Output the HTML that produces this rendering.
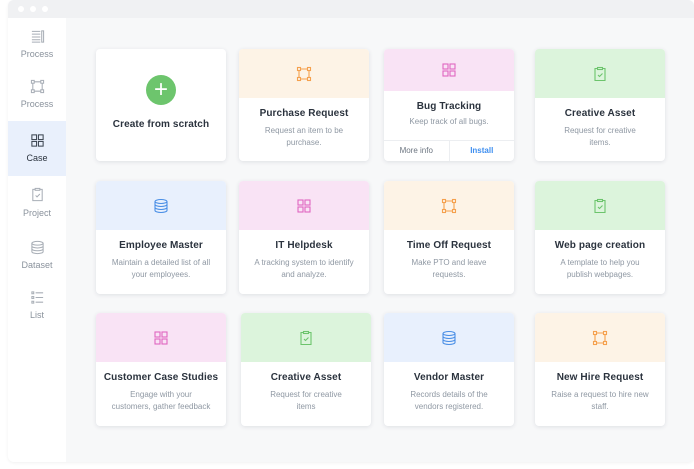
<!DOCTYPE html>
<html><head><meta charset="utf-8"><style>
*{margin:0;padding:0;box-sizing:border-box}
body{width:694px;height:469px;background:#fff;font-family:"Liberation Sans",sans-serif;position:relative;overflow:hidden}
.win{position:absolute;left:8px;top:0;width:686px;height:462px;background:#f7f8f9;border-radius:6px;overflow:hidden;box-shadow:0 1px 3px rgba(0,0,0,.06)}
.bar{position:absolute;left:0;top:0;width:100%;height:18px;background:#f0f1f3}
.dot{position:absolute;top:6px;width:6px;height:6px;border-radius:50%;background:#fff}
.side{position:absolute;left:0;top:18px;width:58px;height:444px;background:#fff}
.si{position:absolute;left:0;width:58px;text-align:center;font-size:9px;color:#8a929c}
.si svg{display:block;margin:0 auto 5px}
.card{position:absolute;width:130px;background:#fff;border-radius:4px;box-shadow:0 1px 4px rgba(40,50,70,.12);overflow:hidden;text-align:center}
.hd{height:49px;display:flex;align-items:center;justify-content:center}
.t{font-size:10px;font-weight:bold;color:#2b333e;margin-top:10px;letter-spacing:.1px}
.d{font-size:8px;color:#8f98a3;line-height:12px;margin-top:6px;padding:0 15px}
.or{background:#fdf3e6}.pk{background:#f9e3f5}.gr{background:#dcf4dc}.bl{background:#e8f0fd}
</style></head><body>
<svg width="0" height="0" style="position:absolute">
<defs>
<symbol id="flow" viewBox="0 0 16 16"><g fill="none" stroke="currentColor" stroke-width="1.1"><rect x="1.5" y="1.5" width="3" height="3"/><rect x="11.5" y="1.5" width="3" height="3"/><rect x="1.5" y="11.5" width="3" height="3"/><rect x="11.5" y="11.5" width="3" height="3"/><path d="M4.5 3h7M4.5 13h7M3 4.5v7M13 4.5v7"/></g></symbol>
<symbol id="grid" viewBox="0 0 16 16"><g fill="none" stroke="currentColor" stroke-width="1.1"><rect x="2" y="2" width="5" height="5"/><rect x="9" y="2" width="5" height="5"/><rect x="2" y="9" width="5" height="5"/><rect x="9" y="9" width="5" height="5"/></g></symbol>
<symbol id="clip" viewBox="0 0 16 16"><g fill="none" stroke="currentColor" stroke-width="1.1"><path d="M5.5 2.5H3v12h10v-12h-2.5"/><rect x="5.5" y="1.5" width="5" height="2"/><path d="M6 9l1.5 1.5 3-3"/></g></symbol>
<symbol id="db" viewBox="0 0 16 16"><g fill="none" stroke="currentColor" stroke-width="1.1"><ellipse cx="8" cy="3.5" rx="6" ry="2"/><path d="M2 3.5v9c0 1.1 2.7 2 6 2s6-.9 6-2v-9M2 6.5c0 1.1 2.7 2 6 2s6-.9 6-2M2 9.5c0 1.1 2.7 2 6 2s6-.9 6-2"/></g></symbol>
<symbol id="proc" viewBox="0 0 16 16"><g fill="none" stroke="currentColor" stroke-width="1.1"><path d="M2 2.5h9M2 5.5h9M2 8.5h9M2 11.5h9M2 14h9"/><rect x="12.5" y="2" width="2" height="12"/></g></symbol>
<symbol id="list" viewBox="0 0 16 16"><g fill="none" stroke="currentColor" stroke-width="1.1"><rect x="2" y="2" width="2" height="2"/><rect x="2" y="7" width="2" height="2"/><rect x="2" y="12" width="2" height="2"/><path d="M6 3h8M6 8h8M6 13h8"/></g></symbol>
</defs></svg>
<div class="win">
<div class="bar"><div class="dot" style="left:10px"></div><div class="dot" style="left:22px"></div><div class="dot" style="left:34px"></div></div>
<div class="side">
<div class="si" style="top:11px"><svg width="15" height="15" style="color:#a8aeb6"><use href="#proc"/></svg>Process</div>
<div class="si" style="top:61px"><svg width="15" height="15" style="color:#a8aeb6"><use href="#flow"/></svg>Process</div>
<div class="si" style="top:103px;height:55px;background:#e9f0fc;padding-top:12px;color:#2b333e"><svg width="15" height="15" style="color:#3b4450"><use href="#grid"/></svg>Case</div>
<div class="si" style="top:168px"><svg width="15" height="17" style="color:#a8aeb6"><use href="#clip"/></svg>Project</div>
<div class="si" style="top:222px"><svg width="15" height="15" style="color:#a8aeb6"><use href="#db"/></svg>Dataset</div>
<div class="si" style="top:272px"><svg width="15" height="15" style="color:#a8aeb6"><use href="#list"/></svg>List</div>
</div>
</div>

<div class="card" style="left:96px;top:49px;height:112px">
<div style="width:30px;height:30px;border-radius:50%;background:#6dc56d;margin:26px auto 0;color:#fff;font-size:24px;line-height:29px;font-weight:300">+</div>
<div class="t" style="margin-top:14px">Create from scratch</div></div>

<div class="card" style="left:239px;top:49px;height:112px"><div class="hd or"><svg width="16" height="16" style="color:#f5a04e"><use href="#flow"/></svg></div><div class="t">Purchase Request</div><div class="d">Request an item to be purchase.</div></div>

<div class="card" style="left:384px;top:49px;height:112px"><div class="hd pk" style="height:42px"><svg width="16" height="16" style="color:#e066c0"><use href="#grid"/></svg></div><div class="t" style="margin-top:10px">Bug Tracking</div><div class="d" style="margin-top:4px">Keep track of all bugs.</div>
<div style="position:absolute;left:0;bottom:0;width:130px;height:21px;border-top:1px solid #eceef1;display:flex;font-size:8px;line-height:20px"><div style="flex:1;color:#6c7580;border-right:1px solid #eceef1">More info</div><div style="flex:1;color:#3d8ef0;font-weight:bold">Install</div></div></div>

<div class="card" style="left:535px;top:49px;height:112px"><div class="hd gr"><svg width="16" height="16" style="color:#6cc46c"><use href="#clip"/></svg></div><div class="t">Creative Asset</div><div class="d">Request for creative<br>items.</div></div>

<div class="card" style="left:96px;top:181px;height:113px"><div class="hd bl"><svg width="16" height="16" style="color:#4a8fe6"><use href="#db"/></svg></div><div class="t">Employee Master</div><div class="d">Maintain a detailed list of all your employees.</div></div>
<div class="card" style="left:239px;top:181px;height:113px"><div class="hd pk"><svg width="16" height="16" style="color:#e066c0"><use href="#grid"/></svg></div><div class="t">IT Helpdesk</div><div class="d">A tracking system to identify and analyze.</div></div>
<div class="card" style="left:384px;top:181px;height:113px"><div class="hd or"><svg width="16" height="16" style="color:#f5a04e"><use href="#flow"/></svg></div><div class="t">Time Off Request</div><div class="d">Make PTO and leave requests.</div></div>
<div class="card" style="left:535px;top:181px;height:113px"><div class="hd gr"><svg width="16" height="16" style="color:#6cc46c"><use href="#clip"/></svg></div><div class="t">Web page creation</div><div class="d">A template to help you publish webpages.</div></div>

<div class="card" style="left:96px;top:313px;height:113px"><div class="hd pk"><svg width="16" height="16" style="color:#e066c0"><use href="#grid"/></svg></div><div class="t">Customer Case Studies</div><div class="d" style="padding:0 6px">Engage with your<br>customers, gather feedback</div></div>
<div class="card" style="left:241px;top:313px;height:113px"><div class="hd gr"><svg width="16" height="16" style="color:#6cc46c"><use href="#clip"/></svg></div><div class="t">Creative Asset</div><div class="d">Request for creative<br>items</div></div>
<div class="card" style="left:384px;top:313px;height:113px"><div class="hd bl"><svg width="16" height="16" style="color:#4a8fe6"><use href="#db"/></svg></div><div class="t">Vendor Master</div><div class="d">Records details of the vendors registered.</div></div>
<div class="card" style="left:535px;top:313px;height:113px"><div class="hd or"><svg width="16" height="16" style="color:#f5a04e"><use href="#flow"/></svg></div><div class="t">New Hire Request</div><div class="d">Raise a request to hire new staff.</div></div>
</body></html>
